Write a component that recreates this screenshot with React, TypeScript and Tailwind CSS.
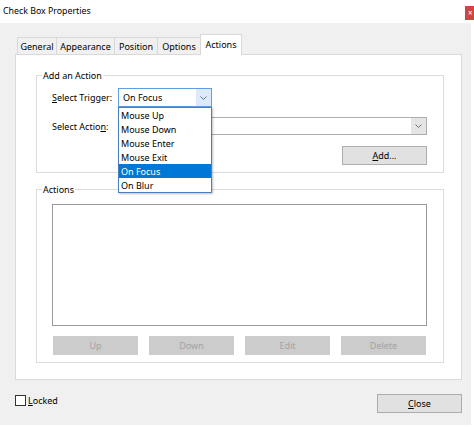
import React from "react";

const Chevron = () => (
  <svg width="7" height="4" viewBox="0 0 7 4" fill="none">
    <path d="M0.5 0.5 L3.5 3.5 L6.5 0.5" stroke="#707070" strokeWidth="1" />
  </svg>
);

const tabs = ["General", "Appearance", "Position", "Options"];
const tabWidths = ["w-[39px]", "w-[58px]", "w-[43px]", "w-[43px]"];
const triggers = ["Mouse Up", "Mouse Down", "Mouse Enter", "Mouse Exit", "On Focus", "On Blur"];

function DisabledButton({ label }: { label: string }) {
  return (
    <div className="w-[85px] h-[19px] bg-[#cccccc] border border-[#cccccc] flex items-center justify-center text-[#a3a3a3]">
      {label}
    </div>
  );
}

export default function App() {
  return (
    <div
      className="w-[474px] h-[427px] bg-white overflow-hidden text-[9px] leading-none text-black"
      style={{ fontFamily: '"Noto Sans", "Open Sans", sans-serif' }}
    >
      {/* Title bar */}
      <div className="h-[23px] flex items-center pl-[3px] relative">
        <span className="text-[8.8px]">Check Box Properties</span>
        <div className="absolute right-0 top-[6px] w-[9px] h-[14px] bg-[#cf4540] flex items-center pl-[3px] text-white text-[8px]">
          ×
        </div>
      </div>

      {/* Body */}
      <div className="w-[471px] h-[402px] bg-[#f0f0f0] flex flex-col pl-[15px]">
        {/* Tabs */}
        <div className="flex pl-[2px] mt-[14px] h-[17px] items-end">
          {tabs.map((t, i) => (
            <div
              key={t}
              className={`${tabWidths[i]} h-[17px] border border-r-0 border-b-0 border-[#d9d9d9] bg-[#f0f0f0] flex items-center justify-center`}
            >
              {t}
            </div>
          ))}
          <div className="w-[42px] h-[21px] -mb-px relative z-10 border border-b-0 border-[#d9d9d9] bg-white flex items-center justify-center pb-[2px]">
            Actions
          </div>
        </div>

        {/* Panel */}
        <div className="w-[447px] h-[326px] bg-white border border-[#d9d9d9] flex flex-col pl-[20px] pt-[20px]">
          {/* Add an Action group */}
          <div className="w-[408px] h-[98px] border border-[#dcdcdc] relative flex flex-col pl-[15px] pt-[12px]">
            <span className="absolute -top-[5px] left-[5px] bg-white px-[1px]">Add an Action</span>

            <div className="flex items-center h-[19px]">
              <span className="w-[66px]">
                <span className="underline">S</span>elect Trigger:
              </span>
              <div className="relative w-[94px] h-[19px] border border-[#5f9ee0] bg-white flex items-center">
                <span className="pl-[4px] flex-1">On Focus</span>
                <div className="w-[15px] h-full bg-[#dcebfc] flex items-center justify-center">
                  <Chevron />
                </div>
                {/* Open list */}
                <div className="absolute left-[-1px] top-[18px] w-[94px] border border-[#4a7fc0] bg-white z-20 shadow-[1px_1px_2px_rgba(0,0,0,0.25)]">
                  {triggers.map((t) => (
                    <div
                      key={t}
                      className={`h-[14px] flex items-center pl-[2px] ${
                        t === "On Focus" ? "bg-[#0078d7] text-white" : ""
                      }`}
                    >
                      {t}
                    </div>
                  ))}
                </div>
              </div>
            </div>

            <div className="flex items-center h-[18px] mt-[10px]">
              <span className="w-[66px]">
                Select Actio<span className="underline">n</span>:
              </span>
              <div className="w-[309px] h-[18px] border border-[#adadad] bg-white flex items-center justify-end">
                <div className="w-[15px] h-full bg-[#e5e5e5] flex items-center justify-center">
                  <Chevron />
                </div>
              </div>
            </div>

            <div className="flex justify-end w-[375px] mt-[11px]">
              <div className="w-[85px] h-[19px] bg-[#e1e1e1] border border-[#adadad] flex items-center justify-center">
                <span>
                  <span className="underline">A</span>dd...
                </span>
              </div>
            </div>
          </div>

          {/* Actions group */}
          <div className="w-[408px] h-[174px] mt-[16px] border border-[#dcdcdc] relative flex flex-col pl-[15px] pt-[14px]">
            <span className="absolute -top-[5px] left-[5px] bg-white px-[1px]">Actions</span>
            <div className="w-[375px] h-[122px] border border-[#9a9a9a] bg-white" />
            <div className="flex gap-[11px] mt-[10px] pl-[1px]">
              <DisabledButton label="Up" />
              <DisabledButton label="Down" />
              <DisabledButton label="Edit" />
              <DisabledButton label="Delete" />
            </div>
          </div>
        </div>

        {/* Footer */}
        <div className="flex items-start mt-[14px] w-[447px]">
          <div className="flex items-center mt-[1px]">
            <div className="w-[11px] h-[11px] border border-[#333333] bg-white" />
            <span className="ml-[2px]">
              <span className="underline">L</span>ocked
            </span>
          </div>
          <div className="ml-auto w-[85px] h-[19px] bg-[#e1e1e1] border border-[#adadad] flex items-center justify-center">
            <span>
              <span className="underline">C</span>lose
            </span>
          </div>
        </div>
      </div>
    </div>
  );
}
